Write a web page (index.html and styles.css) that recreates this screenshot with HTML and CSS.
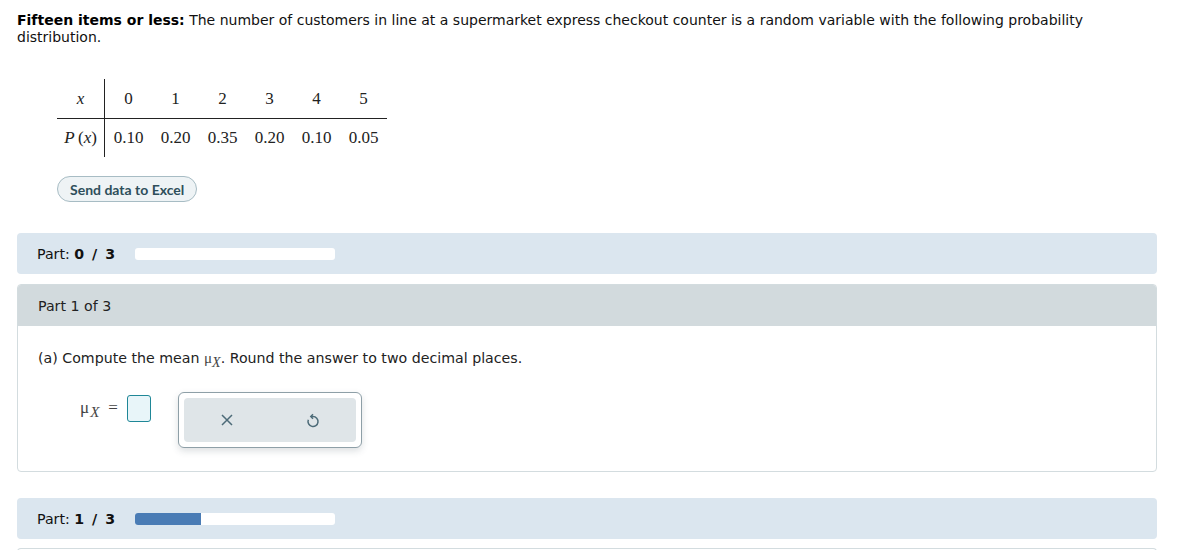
FILE: index.html
```html
<!DOCTYPE html>
<html lang="en">
<head>
  <meta charset="UTF-8">
  <meta name="viewport" content="width=device-width, initial-scale=1.0">
  <title>Fifteen items or less</title>
  <link rel="stylesheet" href="styles.css">
</head>
<body>
  <div class="page">
    <p class="intro"><b>Fifteen items or less:</b> The number of customers in line at a supermarket express checkout counter is a random variable with the following probability distribution.</p>

    <table class="dist">
      <tr class="head">
        <td class="lbl"><i>x</i></td>
        <td>0</td><td>1</td><td>2</td><td>3</td><td>4</td><td>5</td>
      </tr>
      <tr>
        <td class="lbl"><i>P</i>&thinsp;(<i>x</i>)</td>
        <td>0.10</td><td>0.20</td><td>0.35</td><td>0.20</td><td>0.10</td><td>0.05</td>
      </tr>
    </table>

    <button class="excel">Send data to Excel</button>

    <div class="part-bar">
      <span>Part: <b>0 / 3</b></span>
      <div class="progress"><div class="fill" style="width: 0%"></div></div>
    </div>

    <div class="card">
      <div class="card-head">Part 1 of 3</div>
      <div class="card-body">
        <p class="question">(a) Compute the mean <span class="mu">&mu;<sub><i>X</i></sub></span>. Round the answer to two decimal places.</p>
        <div class="answer">
          <span class="mu big">&mu;<sub><i>X</i></sub></span>
          <span class="eq">=</span>
          <span class="input"></span>
          <div class="tools">
            <div class="tools-in">
              <span class="tool">
                <svg width="14" height="14" viewBox="0 0 14 14"><path d="M2 2 L12 12 M12 2 L2 12" stroke="#4d6b78" stroke-width="1.5" fill="none"/></svg>
              </span>
              <span class="tool">
                <svg width="14" height="16" viewBox="0 0 14 16"><path d="M5 4.5 H7 A5 5 0 1 1 2.3 7.8" stroke="#4d6b78" stroke-width="1.5" fill="none"/><path d="M7 2.3 L4.8 4.5 L7 6.7" stroke="#4d6b78" stroke-width="1.5" fill="none"/></svg>
              </span>
            </div>
          </div>
        </div>
      </div>
    </div>

    <div class="part-bar second">
      <span>Part: <b>1 / 3</b></span>
      <div class="progress"><div class="fill" style="width: 33%"></div></div>
    </div>

    <div class="card next"></div>
  </div>
</body>
</html>
```

FILE: styles.css
```css
body { margin: 0; background: #fff; color: #222; font-family: "DejaVu Sans", Verdana, sans-serif; font-size: 14.2px; }
.page { padding: 12px 31px 0 17px; }

.intro { margin: 0; padding-right: 30px; font-size: 14px; line-height: 17px; color: #111; }
.intro b { color: #000; }

.dist { border-collapse: collapse; margin: 33px 0 0 40px; font-family: "Liberation Serif", "Times New Roman", serif; font-size: 17px; color: #222; }
.dist td { width: 47px; padding: 0; text-align: center; height: 38px; }
.dist .head td { height: 39px; border-bottom: 1px solid #222; vertical-align: middle; }
.dist td.lbl { border-right: 1px solid #222; }

.excel { display: block; margin: 19px 0 0 40px; height: 26px; padding: 0 12px; border: 1px solid #a7bcc4; border-radius: 13px; background: #eef3f5; color: #2e4f5b; font-family: Lato, "Open Sans", sans-serif; font-weight: bold; font-size: 14px; }

.part-bar { display: flex; align-items: center; gap: 20px; height: 41px; margin-top: 31px; padding-left: 20px; background: #dbe6ef; border-radius: 4px; color: #111; }
.part-bar.second { margin-top: 26px; }
.part-bar b { word-spacing: 3px; }
.progress { width: 200px; height: 12px; background: #fff; border-radius: 3px; overflow: hidden; }
.fill { height: 100%; background: #4a7cb5; }

.card { margin-top: 10px; border: 1px solid #d3dcdf; border-radius: 4px; overflow: hidden; }
.card-head { height: 41px; line-height: 42px; padding-left: 20px; background: #d2dadd; color: #222; }
.card-body { padding: 24px 20px 23px; }
.question { margin: 0; line-height: 17px; color: #222; }

.mu { font-family: "Liberation Serif", "Times New Roman", serif; font-size: 15px; color: #444; }
.mu sub { font-size: 14px; vertical-align: -4px; line-height: 0; }

.answer { display: flex; align-items: flex-start; margin-top: 25px; padding-left: 42px; }
.mu.big { font-size: 17px; margin-top: 6px; }
.mu.big sub { font-size: 15px; margin-left: 1px; }
.eq { font-family: "Liberation Serif", serif; font-size: 17px; color: #444; margin: 6px 9px 0 9px; }
.input { width: 22px; height: 25px; margin-top: 3px; border: 1px solid #1f8797; border-radius: 3px; background: #e8f5f9; }

.tools { margin-left: 27px; padding: 5px; border: 1px solid #8e9fa7; border-radius: 6px; background: #fff; box-shadow: 0 3px 7px rgba(60, 80, 90, 0.18); }
.tools-in { display: flex; width: 172px; height: 44px; background: #dfe5e8; border-radius: 4px; }
.tool { flex: 1; display: flex; align-items: center; justify-content: center; }

.next { margin-top: 9px; height: 20px; border-bottom: none; }
```
